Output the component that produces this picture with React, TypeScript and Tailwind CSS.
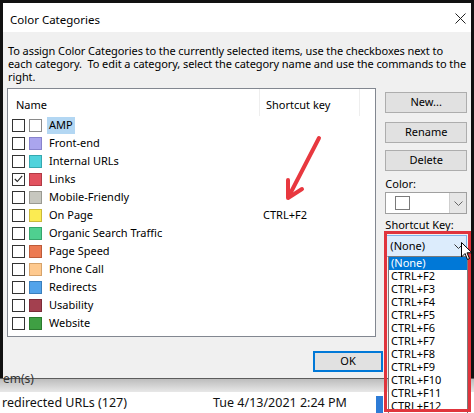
import React from "react";

type Category = {
	name: string;
	fill: string;
	edge: string;
	checked?: boolean;
	selected?: boolean;
	shortcut?: string;
};

const categories: Category[] = [
	{ name: "AMP", fill: "#ffffff", edge: "#8a8a8a", selected: true },
	{ name: "Front-end", fill: "#aaa5ee", edge: "#8883cc" },
	{ name: "Internal URLs", fill: "#4fd3dc", edge: "#35a9b0" },
	{ name: "Links", fill: "#e2525f", edge: "#b13a45", checked: true },
	{ name: "Mobile-Friendly", fill: "#c7c7bf", edge: "#9a9a92" },
	{ name: "On Page", fill: "#fbeb52", edge: "#c9b93a", shortcut: "CTRL+F2" },
	{ name: "Organic Search Traffic", fill: "#4fd090", edge: "#36a56c" },
	{ name: "Page Speed", fill: "#ec7a52", edge: "#bd5b39" },
	{ name: "Phone Call", fill: "#fec98e", edge: "#d6a36b" },
	{ name: "Redirects", fill: "#52a3ea", edge: "#3a7fbd" },
	{ name: "Usability", fill: "#a3404f", edge: "#7c2b38" },
	{ name: "Website", fill: "#3f9f43", edge: "#2b7a2e" },
];

const shortcutOptions = [
	"(None)",
	"CTRL+F2",
	"CTRL+F3",
	"CTRL+F4",
	"CTRL+F5",
	"CTRL+F6",
	"CTRL+F7",
	"CTRL+F8",
	"CTRL+F9",
	"CTRL+F10",
	"CTRL+F11",
	"CTRL+F12",
];

function Checkbox({ checked }: { checked?: boolean }) {
	return (
		<span className="flex h-[13px] w-[13px] items-center justify-center border border-[#333] bg-white">
			{checked && (
				<svg width="9" height="8" viewBox="0 0 9 8" fill="none">
					<path d="M0.8 4 L3.3 6.5 L8.2 0.8" stroke="#222" strokeWidth="1.1" />
				</svg>
			)}
		</span>
	);
}

function DialogButton({ label, isDefault, fixed }: { label: string; isDefault?: boolean; fixed?: boolean }) {
	const size = fixed ? "w-[70px]" : "w-full";
	const edge = isDefault ? "border-2 border-[#0078d7]" : "border border-[#adadad]";
	return (
		<button
			type="button"
			className={`flex h-[21px] ${size} items-center justify-center ${edge} bg-[#e1e1e1] text-[11px] text-black`}
		>
			{label}
		</button>
	);
}

function Chevron({ color = "#444" }: { color?: string }) {
	return (
		<svg width="9" height="5" viewBox="0 0 9 5" fill="none">
			<path d="M0.5 0.5 L4.5 4.5 L8.5 0.5" stroke={color} strokeWidth="1" />
		</svg>
	);
}

export default function App() {
	return (
		<div className="relative flex h-[413px] w-[474px] flex-col overflow-hidden bg-[#111] font-['Noto_Sans',sans-serif] text-black">
			{/* dialog window */}
			<div className="ml-[3px] mr-[3px] mt-[3px] flex h-[375px] flex-col bg-[#f0f0f0]">
				<div className="flex h-[29px] items-center justify-between bg-white pl-[7px] pr-[5px] pt-[5px]">
					<span className="text-[11.5px]">Color Categories</span>
					<svg className="-mt-[4px]" width="11" height="11" viewBox="0 0 11 11" fill="none">
						<path d="M0.5 0.5 L10.5 10.5 M10.5 0.5 L0.5 10.5" stroke="#222" strokeWidth="1" />
					</svg>
				</div>

				<div className="flex flex-1 flex-col px-[4px] pt-[12px]">
					<div className="whitespace-nowrap pl-[1px] text-[11px] leading-[13px] tracking-[-0.08px]">
						<div>To assign Color Categories to the currently selected items, use the checkboxes next to</div>
						<div>each category.&nbsp; To edit a category, select the category name and use the commands to the</div>
						<div>right.</div>
					</div>

					<div className="mt-[5px] flex gap-[9px]">
						{/* category list */}
						<div className="flex h-[249px] w-[371px] flex-col border border-[#828790] bg-white">
							<div className="flex h-[27px] shrink-0 items-center text-[11px]">
								<span className="w-[251px] pl-[8px] pt-[5px]">Name</span>
								<span className="h-full w-px bg-[#eeeeee]" />
								<span className="w-[99px] pl-[6px] pt-[5px]">Shortcut key</span>
								<span className="h-full w-px bg-[#eeeeee]" />
							</div>
							{categories.map((c) => (
								<div key={c.name} className="flex h-[18px] items-center text-[11px]">
									<div className="flex w-[251px] items-center pl-[4px]">
										<Checkbox checked={c.checked} />
										<span
											className="ml-[4px] h-[13px] w-[13px] border"
											style={{ backgroundColor: c.fill, borderColor: c.edge }}
										/>
										<span
											className={
												c.selected
													? "ml-[5px] flex h-[17px] items-center bg-[#b3d7f3] px-[2px]"
													: "ml-[5px] flex h-[17px] items-center px-[2px]"
											}
										>
											{c.name}
										</span>
									</div>
									<span className="pl-[4px]">{c.shortcut}</span>
								</div>
							))}
						</div>

						{/* command column */}
						<div className="mt-[4px] flex w-[82px] flex-col">
							<DialogButton label="New..." />
							<div className="mt-[9px]">
								<DialogButton label="Rename" />
							</div>
							<div className="mt-[7px]">
								<DialogButton label="Delete" />
							</div>
							<span className="mt-[5px] text-[11px] leading-[15px]">Color:</span>
							<div className="mt-[1px] flex h-[22px] items-center border border-[#a0a0a0] bg-white">
								<span className="ml-[9px] h-[14px] w-[15px] border border-[#7a7a7a] bg-white" />
								<span className="ml-auto flex h-full w-[17px] items-center justify-center border-l border-[#cfcfcf] bg-[#e6e6e6]">
									<Chevron color="#666" />
								</span>
							</div>
							<span className="mt-[3px] text-[11px] leading-[15px]">Shortcut Key:</span>
							<div className="mt-[3px] flex h-[22px] items-center border border-[#7eb4ea] bg-[#dcecfc] pl-[4px] pr-[3px] text-[11px]">
								<span>(None)</span>
								<span className="ml-auto">
									<Chevron color="#333" />
								</span>
							</div>
						</div>
					</div>

					<div className="mt-[14px] flex justify-end gap-[9px] pr-[5px]">
						<DialogButton label="OK" isDefault fixed />
						<DialogButton label="Cancel" fixed />
					</div>
				</div>
			</div>

			{/* list view behind the dialog */}
			<div className="relative h-[14px] border-t border-[#5c5c5c] bg-gradient-to-b from-[#bdbdbd] to-[#e8e8e8] pl-[3px]">
				<span className="-mt-[8px] block text-[12px] leading-[15px] text-[#333]">em(s)</span>
			</div>
			<div className="flex h-[21px] items-center bg-white pt-[2px] text-[12.5px] text-[#111]">
				<span className="w-[213px] pl-[2px]">redirected URLs (127)</span>
				<span>Tue 4/13/2021 2:24 PM</span>
				<span className="ml-auto mr-[91px] mt-[2px] h-[17px] w-[7px] bg-[#2d7bd6]" />
			</div>

			{/* open shortcut drop-down */}
			<div className="absolute left-[388px] top-[256px] flex w-[80px] flex-col border border-[#7a7a7a] bg-white text-[11px]">
				{shortcutOptions.map((opt, i) => (
					<span
						key={opt}
						className={
							i === 0
								? "flex h-[13px] items-center bg-[#0078d7] pl-[2px] text-white"
								: "flex h-[13px] items-center pl-[2px]"
						}
					>
						{opt}
					</span>
				))}
			</div>

			{/* red call-out frame */}
			<div className="pointer-events-none absolute left-[384px] top-[231px] h-[181px] w-[87px] border-[3px] border-[#e0343c]" />

			{/* red arrow */}
			<svg className="absolute left-[280px] top-[134px]" width="46" height="70" viewBox="0 0 46 70" fill="none">
				<path d="M39 4 L9 62" stroke="#e8383f" strokeWidth="4" strokeLinecap="round" />
				<path d="M8 46 L8 64 L22 55" stroke="#e8383f" strokeWidth="4" strokeLinecap="round" strokeLinejoin="round" />
			</svg>

			{/* mouse pointer */}
			<svg className="absolute left-[461px] top-[242px]" width="12" height="19" viewBox="0 0 12 19">
				<path d="M0.5 0.5 L0.5 15 L4 11.5 L6.5 17.5 L8.5 16.5 L6 10.8 L11 10.8 Z" fill="#fff" stroke="#000" strokeWidth="1" />
			</svg>
		</div>
	);
}
